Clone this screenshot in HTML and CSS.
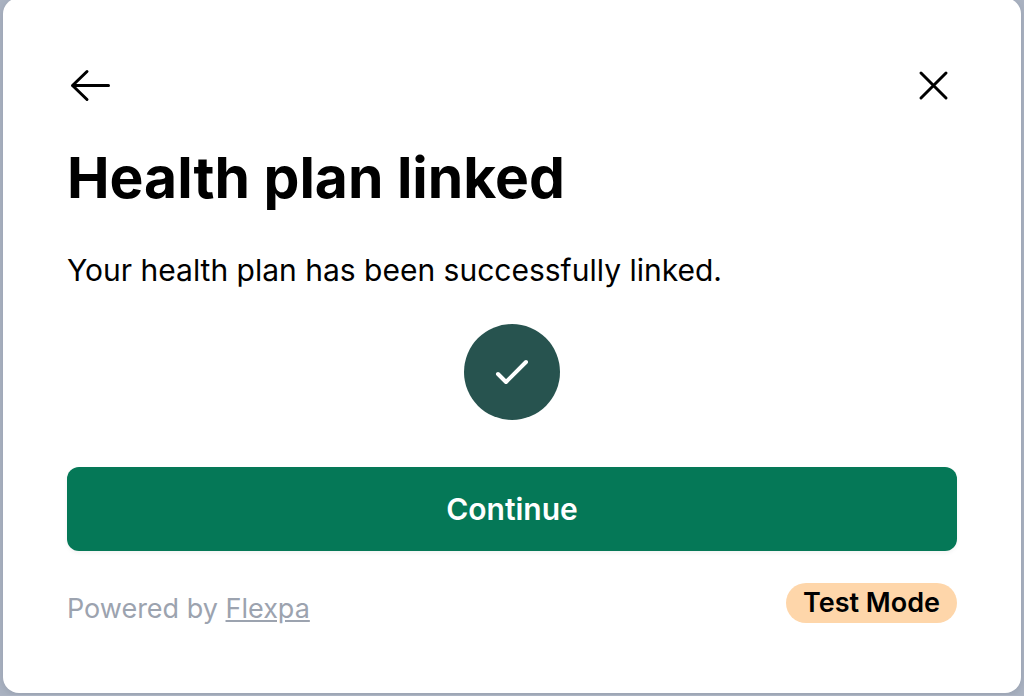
FILE: index.html
```
<!DOCTYPE html>
<html lang="en">
<head>
    <meta charset="UTF-8">
    <title>Health plan linked</title>
    <meta name="viewport" content="width=device-width, initial-scale=1">
    <link rel="stylesheet" href="styles.css">
</head>
<body>

    <main class="card">
        <header class="card-nav">
            <button class="icon-btn" type="button" aria-label="Back">
                <svg viewBox="0 0 48 48" aria-hidden="true">
                    <path d="M20 9.500 5.500 23.500l14.500 14M5.500 23.500h36"/>
                </svg>
            </button>
            <button class="icon-btn" type="button" aria-label="Close">
                <svg viewBox="0 0 48 48" aria-hidden="true">
                    <path d="M12 11l25 25M37 11 12 36"/>
                </svg>
            </button>
        </header>

        <h1>Health plan linked</h1>
        <p class="message">Your health plan has been successfully linked.</p>

        <div class="status">
            <svg viewBox="0 0 48 48" aria-hidden="true">
                <path d="M10 26l8 8 20-20"/>
            </svg>
        </div>

        <button class="continue-btn" type="button">Continue</button>

        <footer class="card-footer">
            <p class="powered">Powered by <a href="#">Flexpa</a></p>
            <span class="badge">Test Mode</span>
        </footer>
    </main>

</body>
</html>
```

FILE: styles.css
```
body {
    font-family: Inter, "Liberation Sans", sans-serif;
    background-color: #abb3c2;
    color: #000;
    margin: 0;
    padding: 0 3px 2px;
}

h1,
p {
    margin: 0;
}

.card {
    background-color: #fff;
    border-radius: 16px;
    box-shadow: 0 2px 8px rgba(75, 85, 99, 0.2);
    margin-top: -2px;
    padding: 64px;
}

.card-nav {
    display: flex;
    justify-content: space-between;
    margin-bottom: 32px;
}

.icon-btn {
    width: 48px;
    height: 48px;
    padding: 0;
    border: none;
    background: none;
    cursor: pointer;
}

svg {
    display: block;
    width: 48px;
    height: 48px;
    fill: none;
    stroke: #000;
    stroke-width: 3;
    stroke-linecap: round;
    stroke-linejoin: round;
}

h1 {
    font-size: 57px;
    line-height: 72px;
    font-weight: 700;
    margin-bottom: 32px;
}

.message {
    font-size: 30px;
    line-height: 48px;
}

.status {
    display: flex;
    align-items: center;
    justify-content: center;
    width: 96px;
    height: 96px;
    margin: 30px auto 47px;
    border-radius: 50%;
    background-color: #27534f;
}

.status svg {
    stroke: #fff;
    stroke-width: 4;
}

.continue-btn {
    display: block;
    width: 100%;
    padding: 18px 32px;
    border: none;
    border-radius: 12px;
    background-color: #057857;
    box-shadow: 0 2px 4px rgba(0, 0, 0, 0.05);
    color: #fff;
    font-family: inherit;
    font-size: 30px;
    font-weight: 600;
    line-height: 48px;
    cursor: pointer;
}

.continue-btn:hover {
    background-color: #065f46;
}

.card-footer {
    display: flex;
    justify-content: space-between;
    align-items: flex-start;
    margin-top: 32px;
}

.powered {
    color: #9ca3af;
    font-size: 27px;
    line-height: 40px;
    padding-top: 6px;
}

.powered a {
    color: inherit;
}

.badge {
    background-color: #fed6aa;
    border-radius: 20px;
    font-size: 27px;
    font-weight: 600;
    line-height: 40px;
    padding: 0 17px;
}
```
